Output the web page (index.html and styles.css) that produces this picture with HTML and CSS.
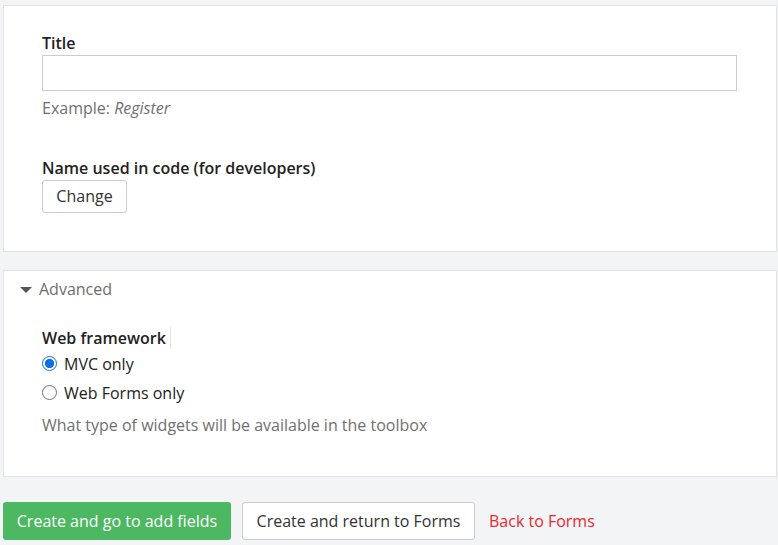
FILE: index.html
```html
<!DOCTYPE html>
<html>
<head>
<meta charset="utf-8">
<link rel="stylesheet" href="styles.css">
</head>
<body>
<div class="page">
  <section class="panel panel-main">
    <label class="field-label">Title</label>
    <input class="text-input" type="text">
    <div class="hint">Example: <em>Register</em></div>
    <label class="field-label code-label">Name used in code (for developers)</label>
    <button class="btn btn-small">Change</button>
  </section>

  <section class="panel panel-adv">
    <div class="adv-toggle">
      <span class="caret"></span>
      <span>Advanced</span>
    </div>
    <div class="adv-body">
      <div class="field-label fw-label"><span class="fw-text">Web framework</span></div>
      <label class="radio-row"><span class="radio checked"></span>MVC only</label>
      <label class="radio-row"><span class="radio"></span>Web Forms only</label>
      <div class="hint hint-adv">What type of widgets will be available in the toolbox</div>
    </div>
  </section>

  <div class="actions">
    <button class="btn btn-primary">Create and go to add fields</button>
    <button class="btn btn-default">Create and return to Forms</button>
    <a class="link-back" href="#">Back to Forms</a>
  </div>
</div>
</body>
</html>
```

FILE: styles.css
```css
* { box-sizing: border-box; }
html, body {
  margin: 0;
  background: #f3f4f6;
  font-family: "Open Sans", "Liberation Sans", sans-serif;
  font-size: 16px;
  color: #222;
}
.page {
  padding: 5px 1px 0 3px;
}
.panel {
  background: #fff;
  border: 1px solid #e2e3e5;
}
.panel-main {
  padding: 26px 39px 38px 38px;
}
.field-label {
  display: block;
  font-weight: 600;
  line-height: 22px;
  color: #222;
}
.text-input {
  display: block;
  width: 100%;
  height: 36px;
  margin: 1px 0 0;
  border: 1px solid #cccccc;
  border-radius: 0;
  padding: 0 8px;
  font: inherit;
  background: #fff;
}
.hint {
  margin-top: 6px;
  line-height: 22px;
  color: #707070;
}
.hint em { font-style: italic; }
.code-label {
  margin-top: 38px;
}
.btn {
  font-family: "Open Sans", "Liberation Sans", sans-serif;
  font-size: 16px;
  cursor: pointer;
}
.btn-small {
  display: block;
  margin-top: 1px;
  height: 33px;
  width: 85px;
  padding: 0 0 1px;
  background: #fff;
  border: 1px solid #cccccc;
  border-radius: 3px;
  color: #333;
}
.panel-adv {
  margin-top: 18px;
  padding: 7px 39px 40px 0;
}
.adv-toggle {
  display: flex;
  align-items: center;
  gap: 7px;
  padding-left: 16px;
  line-height: 22px;
  color: #6e6e6e;
}
.caret {
  width: 0;
  height: 0;
  border-left: 6px solid transparent;
  border-right: 6px solid transparent;
  border-top: 6px solid #555;
  margin-top: 1px;
}
.adv-body {
  padding-left: 38px;
  margin-top: 27px;
}
.fw-label { display: flex; }
.fw-text {
  padding-right: 4px;
  border-right: 1px solid #e5e5e5;
}
.radio-row {
  display: flex;
  align-items: center;
  gap: 7px;
  height: 29px;
  line-height: 22px;
  color: #222;
}
.radio {
  width: 15px;
  height: 15px;
  border-radius: 50%;
  border: 1px solid #767676;
  background: #fff;
  flex: none;
}
.radio.checked {
  border: 1px solid #0a6fe8;
  background: radial-gradient(circle, #0a6fe8 0 4.3px, #fff 4.8px);
  border-color: #0a6fe8;
}
.hint-adv {
  margin-top: 7px;
}
.actions {
  display: flex;
  align-items: center;
  margin-top: 25px;
}
.btn-primary {
  height: 38px;
  padding: 0 12px;
  background: #4cb862;
  color: #fff;
  border: none;
  border-radius: 3px;
  width: 228px;
}
.btn-default {
  height: 38px;
  margin-left: 11px;
  width: 233px;
  background: #fff;
  color: #333;
  border: 1px solid #cccccc;
  border-radius: 3px;
}
.link-back {
  margin-left: 14px;
  color: #e8282e;
  text-decoration: none;
}
```
